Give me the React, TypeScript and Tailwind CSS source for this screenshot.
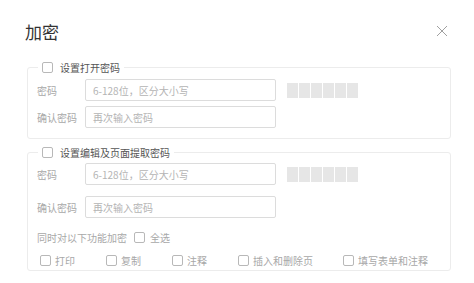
import React from 'react';

const Box: React.FC<{ className?: string }> = ({ className = '' }) => (
  <span className={`inline-block w-[11px] h-[11px] border border-[#b8b8b8] rounded-[2px] bg-white shrink-0 ${className}`} />
);

const Strength: React.FC = () => (
  <div className="flex gap-px ml-[11px] h-[15px]">
    {[0, 1, 2, 3, 4, 5].map(i => (
      <span key={i} className="w-[11px] h-full bg-[#e6e6e6]" />
    ))}
  </div>
);

const Row: React.FC<{ label: string; placeholder: string; bars?: boolean; className?: string }> = ({
  label,
  placeholder,
  bars,
  className = '',
}) => (
  <div className={`flex items-center ${className}`}>
    <span className="w-[48px] text-[10px] text-[#a8a8a8]">{label}</span>
    <div className="w-[191px] h-[22px] border border-[#dcdcdc] rounded-[2px] flex items-center pl-[7px] text-[10px] text-[#b4b4b4]">
      {placeholder}
    </div>
    {bars && <Strength />}
  </div>
);

const Legend: React.FC<{ text: string }> = ({ text }) => (
  <legend className="flex items-center h-[16px] px-[4px] ml-px">
    <Box />
    <span className="ml-[7px] text-[10px] text-[#555]">{text}</span>
  </legend>
);

const options = [
  { label: '打印', w: 'w-[66px]' },
  { label: '复制', w: 'w-[66px]' },
  { label: '注释', w: 'w-[66px]' },
  { label: '插入和删除页', w: 'w-[105px]' },
  { label: '填写表单和注释', w: '' },
];

export default function App() {
  return (
    <div
      className="w-[474px] h-[283px] bg-white overflow-hidden relative"
      style={{ fontFamily: '"Noto Sans CJK SC", "Noto Sans", sans-serif' }}
    >
      <div className="flex items-center justify-between pl-[25px] pr-[26px] pt-[20px]">
        <h1 className="text-[17px] leading-[24px] text-[#333]">加密</h1>
        <svg width="12" height="12" viewBox="0 0 12 12" className="mt-[-2px]">
          <path d="M1 1L11 11M11 1L1 11" stroke="#a0a0a0" strokeWidth="1" />
        </svg>
      </div>

      <fieldset className="mt-[15px] ml-[27px] w-[424px] border border-[#ececec] rounded-[3px] px-[9px] pb-[10px]">
        <Legend text="设置打开密码" />
        <Row label="密码" placeholder="6-128位，区分大小写" bars className="mt-[4px]" />
        <Row label="确认密码" placeholder="再次输入密码" className="mt-[5px]" />
      </fieldset>

      <fieldset className="mt-[5px] ml-[27px] w-[424px] border border-[#ececec] rounded-[3px] px-[9px] pb-[2px]">
        <Legend text="设置编辑及页面提取密码" />
        <Row label="密码" placeholder="6-128位，区分大小写" bars className="mt-[3px]" />
        <Row label="确认密码" placeholder="再次输入密码" className="mt-[11px]" />
        <div className="flex items-center h-[16px] mt-[11px] text-[10px] text-[#a8a8a8]">
          <span>同时对以下功能加密</span>
          <Box className="ml-[7px]" />
          <span className="ml-[5px]">全选</span>
        </div>
        <div className="flex items-center h-[16px] mt-[7px] ml-[3px] text-[10px] text-[#a8a8a8]">
          {options.map(o => (
            <div key={o.label} className={`flex items-center ${o.w}`}>
              <Box />
              <span className="ml-[4px]">{o.label}</span>
            </div>
          ))}
        </div>
      </fieldset>
    </div>
  );
}
